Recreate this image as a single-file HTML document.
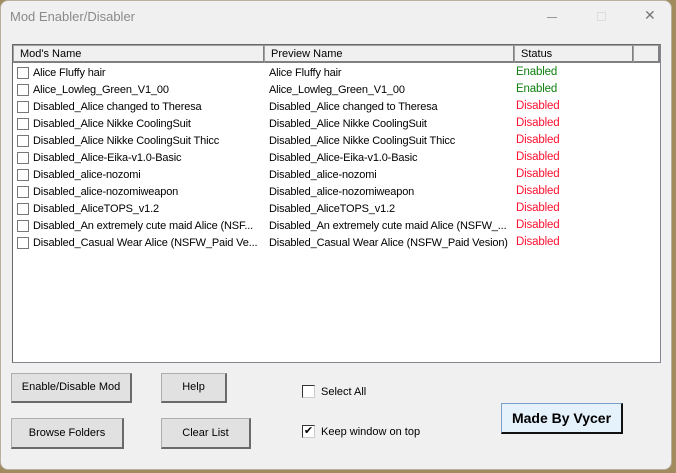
<!DOCTYPE html>
<html><head><meta charset="utf-8"><style>
*{margin:0;padding:0;box-sizing:border-box}
body{width:676px;height:473px;background:#a08a5e;font-family:"Liberation Sans",Arial,sans-serif;font-size:11px;color:#000;position:relative;overflow:hidden}
.win{position:absolute;left:0;top:0;width:672px;height:470px;background:#f0f0f0;border-radius:8px;border:1px solid #b8b0a0}
.t{position:absolute;white-space:nowrap}
.title{left:9px;top:8px;font-size:13px;color:#8a8a8a}
.list{position:absolute;left:11px;top:43px;width:649px;height:319px;background:#fff;border:1px solid #828790;border-top-color:#696969;border-left-color:#696969}
.hd{position:absolute;top:0;height:18px;background:#f0f0f0;border:1px solid #a0a0a0;border-bottom:2px solid #808080;border-right:2px solid #808080;padding-left:6px;line-height:16px}
.row{position:absolute;left:0;height:17px;width:100%;letter-spacing:-0.15px}
.cb{position:absolute;left:4px;top:2px;width:12px;height:12px;border:1px solid #777;background:#fff}
.c1{left:20px;top:2px}.c2{left:256px;top:2px}.c3{left:503px;top:1px;font-size:11.5px}
.en{color:#108010}.di{color:#ff1030}
.btn{position:absolute;background:#e1e1e1;border:1px solid #adadad;border-right:2px solid #6a6a6a;border-bottom:2px solid #6a6a6a;text-align:center;font-size:11px}
.sc{position:absolute;width:13px;height:13px;border:1px solid #333;background:#fff;border-right-color:#ccc;border-bottom-color:#ccc}
</style></head><body>
<div class="win">
<div class="t title">Mod Enabler/Disabler</div>
<div style="position:absolute;left:546px;top:16px;width:10px;height:1px;background:#999"></div>
<div style="position:absolute;left:596px;top:11px;width:9px;height:9px;border:1px solid #ddd"></div>
<div class="t" style="left:643px;top:6px;font-size:14px;color:#777">✕</div>
<div class="list">
<div class="hd" style="left:0;width:252px">Mod's Name</div>
<div class="hd" style="left:251px;width:251px">Preview Name</div>
<div class="hd" style="left:501px;width:120px">Status</div>
<div class="hd" style="left:620px;width:27px"></div>
<div class="row" style="top:20px"><div class="cb"></div><div class="t c1">Alice Fluffy hair</div><div class="t c2">Alice Fluffy hair</div><div class="t c3 en">Enabled</div></div>
<div class="row" style="top:37px"><div class="cb"></div><div class="t c1">Alice_Lowleg_Green_V1_00</div><div class="t c2">Alice_Lowleg_Green_V1_00</div><div class="t c3 en">Enabled</div></div>
<div class="row" style="top:54px"><div class="cb"></div><div class="t c1">Disabled_Alice changed to Theresa</div><div class="t c2">Disabled_Alice changed to Theresa</div><div class="t c3 di">Disabled</div></div>
<div class="row" style="top:71px"><div class="cb"></div><div class="t c1">Disabled_Alice Nikke CoolingSuit</div><div class="t c2">Disabled_Alice Nikke CoolingSuit</div><div class="t c3 di">Disabled</div></div>
<div class="row" style="top:88px"><div class="cb"></div><div class="t c1">Disabled_Alice Nikke CoolingSuit Thicc</div><div class="t c2">Disabled_Alice Nikke CoolingSuit Thicc</div><div class="t c3 di">Disabled</div></div>
<div class="row" style="top:105px"><div class="cb"></div><div class="t c1">Disabled_Alice-Eika-v1.0-Basic</div><div class="t c2">Disabled_Alice-Eika-v1.0-Basic</div><div class="t c3 di">Disabled</div></div>
<div class="row" style="top:122px"><div class="cb"></div><div class="t c1">Disabled_alice-nozomi</div><div class="t c2">Disabled_alice-nozomi</div><div class="t c3 di">Disabled</div></div>
<div class="row" style="top:139px"><div class="cb"></div><div class="t c1">Disabled_alice-nozomiweapon</div><div class="t c2">Disabled_alice-nozomiweapon</div><div class="t c3 di">Disabled</div></div>
<div class="row" style="top:156px"><div class="cb"></div><div class="t c1">Disabled_AliceTOPS_v1.2</div><div class="t c2">Disabled_AliceTOPS_v1.2</div><div class="t c3 di">Disabled</div></div>
<div class="row" style="top:173px"><div class="cb"></div><div class="t c1">Disabled_An extremely cute maid Alice (NSF...</div><div class="t c2">Disabled_An extremely cute maid Alice (NSFW_...</div><div class="t c3 di">Disabled</div></div>
<div class="row" style="top:190px"><div class="cb"></div><div class="t c1">Disabled_Casual Wear Alice (NSFW_Paid Ve...</div><div class="t c2">Disabled_Casual Wear Alice (NSFW_Paid Vesion)</div><div class="t c3 di">Disabled</div></div>
</div>
<div class="btn" style="left:10px;top:372px;width:121px;height:30px;line-height:27px">Enable/Disable Mod</div>
<div class="btn" style="left:160px;top:372px;width:66px;height:30px;line-height:27px">Help</div>
<div class="btn" style="left:10px;top:417px;width:113px;height:31px;line-height:28px">Browse Folders</div>
<div class="btn" style="left:160px;top:417px;width:90px;height:31px;line-height:28px">Clear List</div>
<div class="sc" style="left:301px;top:384px"></div>
<div class="t" style="left:320px;top:385px">Select All</div>
<div class="sc" style="left:301px;top:424px;font-size:11px;line-height:11px;text-align:center">✔</div>
<div class="t" style="left:320px;top:425px">Keep window on top</div>
<div class="btn" style="left:500px;top:402px;width:122px;height:31px;line-height:28px;background:#e5f1fb;border-color:#7aa0c8;border-right-color:#111;border-bottom-color:#111;font-weight:bold;font-size:14px">Made By Vycer</div>
</div>
</body></html>
